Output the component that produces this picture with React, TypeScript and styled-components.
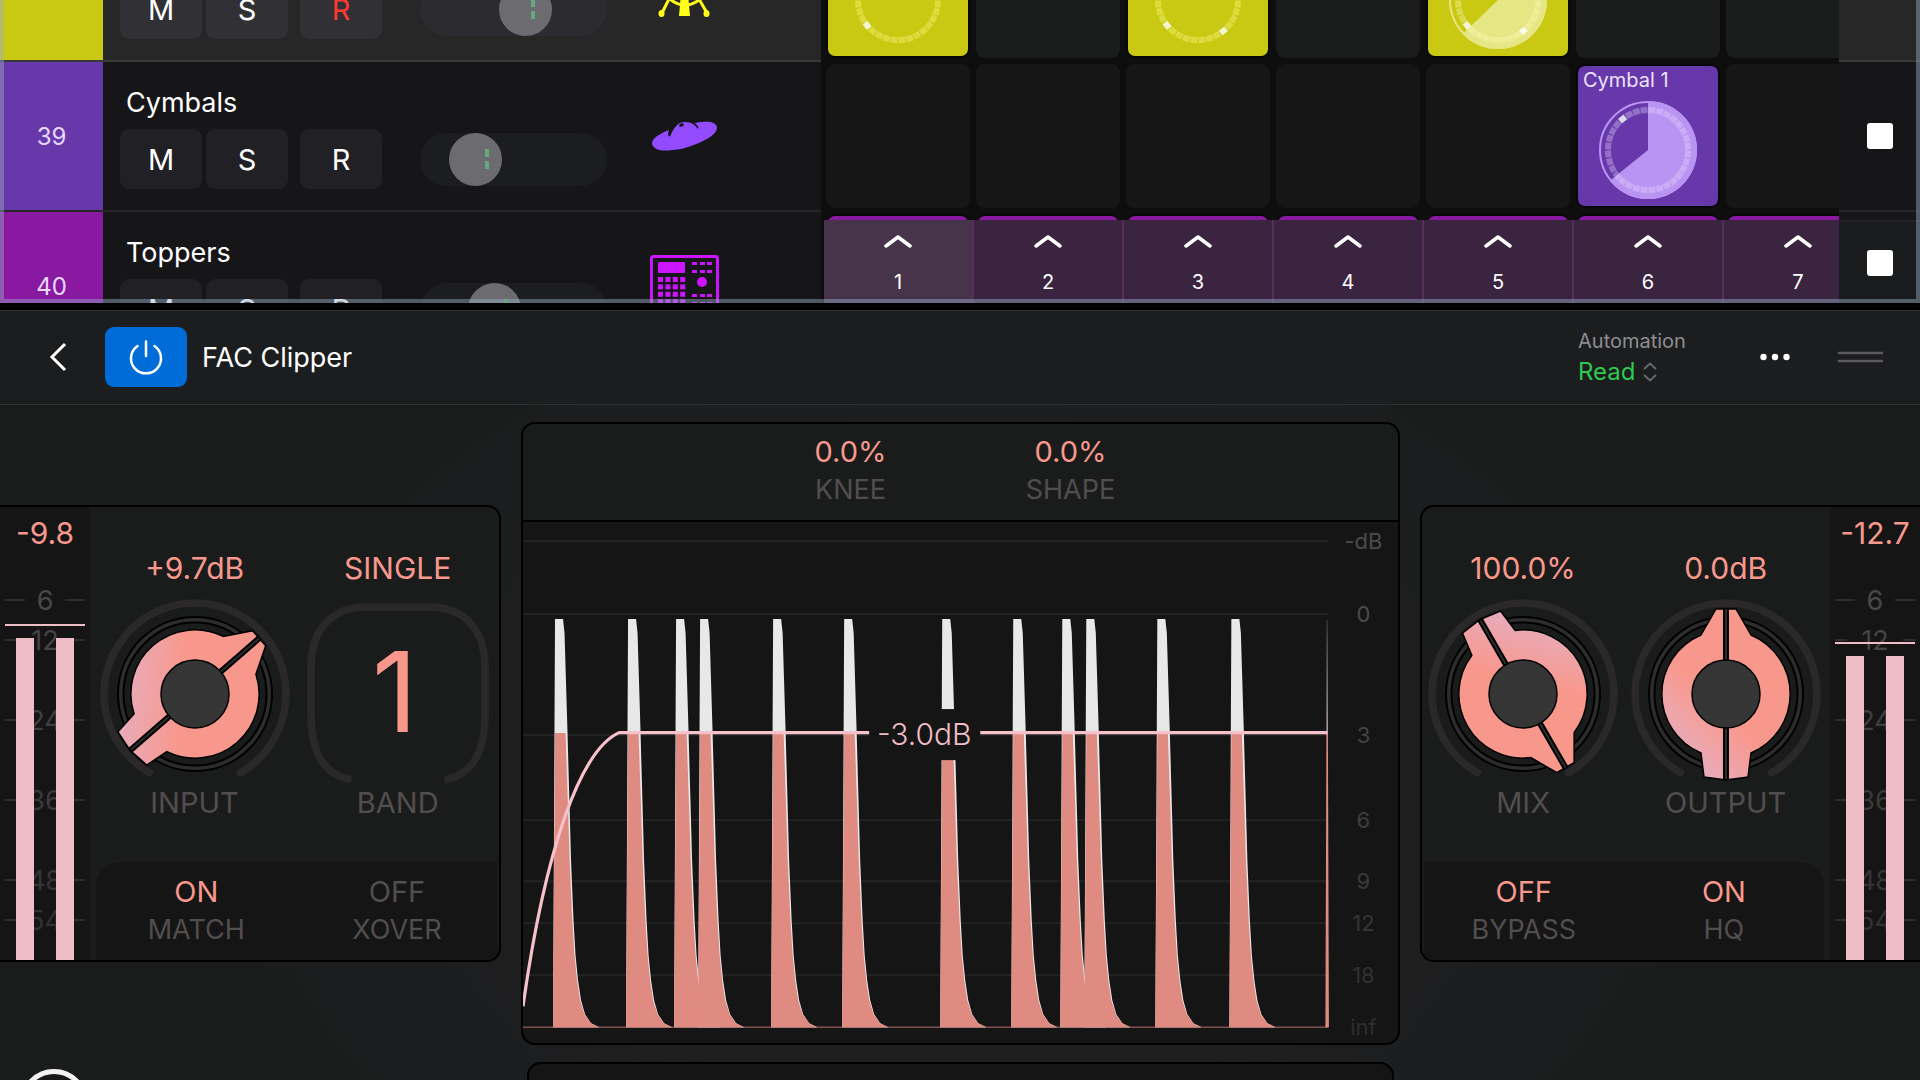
import React from 'react';
import styled, { createGlobalStyle } from 'styled-components';

const color = {
  salmon: '#f8988d',
  pink: '#efbdc6',
  muted: '#524d4e',
  well: '#151515',
  panel: '#1a1c1b',
};

const GlobalStyle = createGlobalStyle`
  *, *::before, *::after { box-sizing: border-box; }
  body {
    margin: 0;
    background: #000;
    color: #fff;
    font-family: Inter, "Liberation Sans", sans-serif;
  }
  button, select, input { font: inherit; color: inherit; margin: 0; }
  button { border: 0; padding: 0; background: none; cursor: pointer; }
`;

const Screen = styled.main`
  display: flex;
  flex-direction: column;
  height: 100vh;
  overflow: hidden;
`;

/* ---------- Track list and live loops grid ---------- */

const Tracks = styled.section`
  position: relative;
  display: flex;
  flex: none;
  height: 303px;
  overflow: hidden;
  background: #0e0e0e;
`;

const FocusFrame = styled.div`
  position: absolute;
  inset: 0;
  border: 4px solid rgba(150, 175, 200, 0.45);
  border-top: 0;
  pointer-events: none;
`;

const TrackList = styled.div`
  flex: 0 0 821px;
  margin-top: -88px;
`;

const TrackRow = styled.div<{ $active?: boolean }>`
  display: flex;
  height: 150px;
  background: ${(p) => (p.$active ? '#272728' : '#161618')};
  border-bottom: 2px solid ${(p) => (p.$active ? '#38383a' : '#262628')};
`;

const TrackNumber = styled.div<{ $fill: string }>`
  display: flex;
  align-items: center;
  justify-content: center;
  width: 103px;
  background: ${(p) => p.$fill};
  color: #e6d8fb;
  font-size: 24px;
`;

const TrackBody = styled.div`
  display: flex;
  flex-direction: column;
  gap: 10px;
  width: 504px;
  padding: 25px 0 0 17px;
`;

const TrackName = styled.div`
  height: 32px;
  padding-left: 6px;
  font-size: 27px;
  line-height: 32px;
`;

const TrackControls = styled.div`
  display: flex;
  align-items: center;
`;

const TrackButton = styled.button<{ $active?: boolean; $armed?: boolean }>`
  width: 82px;
  height: 60px;
  border-radius: 9px;
  background: ${(p) => (p.$active ? '#313035' : '#212024')};
  color: ${(p) => (p.$armed ? '#ff3b30' : '#fff')};
  font-size: 29px;
  & + & { margin-left: 4px; }
  & + & + & { margin-left: 12px; }
`;

const Fader = styled.label`
  display: grid;
  align-items: center;
  width: 187px;
  margin-left: auto;
  > * { grid-area: 1 / 1; }
`;

const FaderInput = styled.input<{ $active?: boolean }>`
  appearance: none;
  width: 100%;
  height: 53px;
  border-radius: 27px;
  background: ${(p) => (p.$active ? '#2c2b2f' : '#1c1d1e')};
  &::-webkit-slider-thumb {
    appearance: none;
    width: 53px;
    height: 53px;
    border-radius: 50%;
    background: #6c6b6f;
  }
`;

const LevelTicks = styled.span`
  display: grid;
  gap: 4px;
  width: 4px;
  z-index: 1;
  pointer-events: none;
  i { height: 8px; background: #6aa781; }
`;

const TrackIcon = styled.div`
  display: flex;
  align-items: center;
  padding-left: 43px;
`;

const LoopGrid = styled.div`
  display: flex;
  flex-direction: column;
  flex: 1;
  min-width: 0;
  overflow: hidden;
`;

const CellViewport = styled.div`
  flex: 1;
  min-height: 0;
  overflow: hidden;
`;

const CellRows = styled.div`
  display: grid;
  grid-template-columns: repeat(7, 150px);
  grid-auto-rows: 150px;
  margin: -89px 0 0 2px;
`;

const Cell = styled.div<{ $active?: boolean }>`
  margin: 3px;
  padding: 2px;
  border-radius: 9px;
  background: ${(p) => (p.$active ? '#1b1c1c' : '#161617')};
`;

const Clip = styled.button<{ $fill: string }>`
  display: grid;
  grid-template-rows: 24px 1fr;
  width: 100%;
  height: 100%;
  border-radius: 7px;
  background: ${(p) => p.$fill};
  box-shadow: 0 0 0 2px #080808;
  color: #ece2fb;
  text-align: left;
`;

const ClipName = styled.span`
  padding: 2px 0 0 5px;
  font-size: 20px;
  line-height: 24px;
`;

const ClipDial = styled.svg`
  display: block;
  margin: 11px auto 0;
`;

const SceneStrip = styled.div`
  display: grid;
  grid-template-columns: repeat(7, 150px);
  height: 83px;
  padding-left: 3px;
`;

const Scene = styled.button<{ $current?: boolean }>`
  display: flex;
  flex-direction: column;
  align-items: center;
  gap: 20px;
  padding-top: 15px;
  border-right: 2px solid #54305a;
  background: ${(p) => (p.$current ? '#47344b' : '#3a2440')};
  font-size: 20px;
  line-height: 28px;
`;

const StopColumn = styled.div`
  display: flex;
  flex-direction: column;
  flex: 0 0 81px;
`;

const StopRows = styled.div`
  flex: 1;
  min-height: 0;
  overflow: hidden;
  > :first-child { margin-top: -88px; }
`;

const StopRow = styled(TrackRow)`
  align-items: center;
  justify-content: center;
`;

const StopAll = styled.div`
  display: flex;
  align-items: center;
  justify-content: center;
  height: 83px;
  border-top: 2px solid #232325;
  background: #1b1c1d;
`;

const StopButton = styled.button`
  width: 26px;
  height: 26px;
  border-radius: 3px;
  background: #fff;
`;

/* ---------- Plugin header ---------- */

const PluginHeader = styled.header`
  display: flex;
  align-items: center;
  flex: none;
  height: 95px;
  margin-top: 7px;
  padding: 0 36px 2px 48px;
  border-top: 1px solid #333436;
  border-bottom: 1px solid #303133;
  background: #1c1d1f;
`;

const PowerButton = styled.button`
  display: flex;
  align-items: center;
  justify-content: center;
  width: 82px;
  height: 60px;
  margin-left: 37px;
  border-radius: 9px;
  background: #006cd8;
`;

const PluginTitle = styled.h1`
  margin: 2px auto 0 15px;
  font-size: 27px;
  font-weight: 400;
  line-height: 36px;
`;

const Automation = styled.label`
  display: flex;
  flex-direction: column;
  width: 175px;
  padding-top: 2px;
  color: #8d8d90;
  font-size: 20px;
  line-height: 28px;
`;

const AutomationValue = styled.span`
  display: flex;
  align-items: center;
  gap: 7px;
  height: 34px;
`;

const AutomationSelect = styled.select`
  appearance: none;
  padding: 0;
  border: 0;
  background: none;
  color: #30c850;
  font-size: 24px;
  line-height: 32px;
`;

const IconButton = styled.button`
  display: flex;
  align-items: center;
`;

const GripButton = styled(IconButton)`
  margin-left: 46px;
`;

/* ---------- Plugin body ---------- */

const PluginBody = styled.section`
  display: grid;
  grid-template-columns: 501fr 878fr 500fr;
  grid-template-rows: max-content max-content;
  gap: 17px 20px;
  align-items: start;
  flex: 1;
  min-height: 0;
  padding-top: 17px;
  overflow: hidden;
  background: radial-gradient(ellipse 42% 86% at 50% 60%, #201f1f 50%, #1b1d1f 76%, #1a1c1b 100%);
`;

const SidePanel = styled.section<{ $side: 'left' | 'right' }>`
  display: flex;
  flex-direction: ${(p) => (p.$side === 'left' ? 'row' : 'row-reverse')};
  margin-top: 83px;
  border: 2px solid #000;
  border-${(p) => p.$side}: 0;
  border-radius: ${(p) => (p.$side === 'left' ? '0 14px 14px 0' : '14px 0 0 14px')};
  background: ${color.panel};
  overflow: hidden;
`;

const MeterColumn = styled.div`
  display: flex;
  flex-direction: column;
  flex: 0 0 90px;
  padding-top: 10px;
  background: ${color.well};
`;

const MeterPeak = styled.output`
  color: ${color.salmon};
  font-size: 30px;
  line-height: 32px;
  text-align: center;
  white-space: nowrap;
`;

const MeterStack = styled.div`
  display: grid;
  flex: 1;
  > * { grid-area: 1 / 1; }
`;

const MeterScale = styled.div`
  display: flex;
  flex-direction: column;
  padding: 31px 5px 0;
`;

const MeterMark = styled.div<{ $gap?: boolean; $wide?: boolean; $tone: string }>`
  display: grid;
  grid-template-columns: ${(p) => (p.$wide ? '12px 1fr 12px' : '20px 1fr 20px')};
  align-items: center;
  height: 40px;
  margin-top: ${(p) => (p.$gap ? '40px' : '0')};
  color: ${(p) => p.$tone};
  font-size: 27px;
  text-align: center;
  &::before, &::after { content: ''; height: 2px; background: #2d2d2d; }
`;

const MeterBars = styled.div`
  display: flex;
  flex-direction: column;
  justify-content: flex-end;
  gap: 12px;
`;

const PeakLine = styled.div`
  height: 2px;
  margin: 0 5px;
  background: ${color.pink};
`;

const BarPair = styled.div<{ $level: number }>`
  display: flex;
  justify-content: center;
  gap: 22px;
  height: ${(p) => p.$level}px;
  i { width: 18px; background: ${color.pink}; }
`;

const Controls = styled.div`
  display: flex;
  flex-direction: column;
  flex: 1;
  min-width: 0;
  padding-top: 45px;
`;

const ControlRow = styled.div<{ $side: 'left' | 'right' }>`
  display: grid;
  grid-template-columns: 1fr 1fr;
  margin-${(p) => p.$side}: 3px;
`;

const Control = styled.label`
  position: relative;
  display: flex;
  flex-direction: column;
  align-items: center;
`;

const HiddenInput = styled.input`
  position: absolute;
  inset: 0;
  opacity: 0;
`;

const Value = styled.span`
  color: ${color.salmon};
  font-size: 30px;
  line-height: 32px;
`;

const Caption = styled.span`
  color: ${color.muted};
  font-size: 29px;
  line-height: 32px;
`;

const Drawing = styled.svg`
  display: block;
  margin-top: 16px;
  overflow: visible;
`;

const BandDial = styled.span`
  display: grid;
  place-items: center;
  > * { grid-area: 1 / 1; }
`;

const BandCount = styled.span`
  padding: 10px 6px 0 0;
  color: ${color.salmon};
  font-size: 112px;
  font-weight: 400;
  line-height: 112px;
`;

const ToggleBar = styled.div<{ $side: 'left' | 'right' }>`
  display: grid;
  grid-template-columns: 1fr 1fr;
  margin-top: 43px;
  margin-${(p) => p.$side}: 6px;
  margin-${(p) => (p.$side === 'left' ? 'right' : 'left')}: 2px;
  padding: 11px 0;
  border-radius: ${(p) => (p.$side === 'left' ? '24px 0 0 0' : '0 24px 0 0')};
  background: ${color.well};
`;

const Toggle = styled.button<{ $off?: boolean }>`
  display: flex;
  flex-direction: column;
  align-items: center;
  color: ${(p) => (p.$off ? color.muted : color.salmon)};
  font-size: 29px;
  line-height: 38px;
  small { color: ${color.muted}; font-size: 27px; }
`;

const CurvePanel = styled.section`
  border: 2px solid #000;
  border-radius: 14px;
  background: ${color.well};
  overflow: hidden;
`;

const CurveHeader = styled.div`
  display: grid;
  grid-template-columns: 220px 220px;
  justify-content: center;
  padding: 9px 0 11px;
  border-bottom: 2px solid #000;
  background: ${color.panel};
`;

const Chart = styled.svg`
  display: block;
  width: 100%;
  height: auto;
`;

const RoundButton = styled.button`
  width: 68px;
  height: 68px;
  margin: 7px 0 0 20px;
  border: 5px solid #f2f2f2;
  border-radius: 50%;
  background: #181818;
`;

const LowerPanel = styled.section`
  align-self: stretch;
  min-height: 60px;
  margin: 0 6px;
  border: 2px solid #000;
  border-radius: 14px 14px 0 0;
  background: ${color.well};
`;

/* ---------- Drawings ---------- */

const polar = (r: number, deg: number): [number, number] => {
  const a = (deg * Math.PI) / 180;
  return [r * Math.sin(a), -r * Math.cos(a)];
};

const DrumIcon = () => (
  <svg width="70" height="62" viewBox="0 0 70 62" fill="none" stroke="#ffff18" strokeWidth="3">
    <path d="M10 10h50v18c-4 14-15 22-25 22S14 42 10 28z" />
    <path d="M19 44l-7 14M49 44l8 14" />
    <path d="M31 38h7l2 23H29z" fill="#ffff18" stroke="none" />
    <ellipse cx="11.500" cy="58.500" rx="3" ry="3.500" fill="#ffff18" stroke="none" />
    <ellipse cx="56.500" cy="58.500" rx="3" ry="3.500" fill="#ffff18" stroke="none" />
  </svg>
);

const CymbalIcon = () => (
  <svg width="70" height="62" viewBox="0 0 70 62">
    <path
      fill="#944aff"
      d="M19 25C11 28 2 33 2 38.500C3 44 10 46 18 45.500C28 45 37 43 45 39.500C57 35 67 29 67 22.500C66 17 59 16.500 53 17C50 17 47 17.500 44.500 18.200C47 19.500 49 21.500 48 24C45 20 42 17 35 17C28 17 25 22 22 27C20.500 30 20.500 32.500 18.500 31C17.500 29 18.500 27 19 25Z"
    />
    <ellipse cx="31.500" cy="20" rx="2.500" ry="1.500" fill="#161618" transform="rotate(-20 31.500 20)" />
  </svg>
);

const DrumMachineIcon = () => (
  <svg width="70" height="62" viewBox="0 0 70 62" fill="#cc14ff">
    <rect x="1.500" y="1.500" width="66" height="60" rx="2" fill="none" stroke="#cc14ff" strokeWidth="3" />
    <rect x="8" y="7" width="27" height="11" rx="1" />
    {[0, 1, 2, 3].map((r) =>
      [0, 1, 2, 3].map((c) => <rect key={`${r}${c}`} x={8 + c * 7.400} y={22 + r * 7.400} width="5" height="5" />),
    )}
    {[7, 15, 39, 47].map((y) => [42, 50, 57].map((x) => <rect key={`${x}-${y}`} x={x} y={y} width="5" height="3" />))}
    <circle cx="52" cy="27" r="5" />
  </svg>
);

type DialProps = { line: string; pie?: [number, number]; fill?: string; hits: number[] };

const LoopDial = ({ line, pie, fill, hits }: DialProps) => {
  const wedge = (from: number, to: number) => {
    const [x1, y1] = polar(49, from);
    const [x2, y2] = polar(49, to);
    return `M0 0L${x1} ${y1}A49 49 0 ${to - from > 180 ? 1 : 0} 1 ${x2} ${y2}Z`;
  };
  return (
    <ClipDial width="98" height="98" viewBox="-49 -49 98 98">
      {pie && <path d={wedge(pie[0], pie[1])} fill={fill} />}
      {pie && <circle r="48" fill="none" stroke={fill} strokeWidth="2" />}
      {Array.from({ length: 32 }, (_, i) => (
        <rect
          key={i}
          x="-3.500"
          y="-43"
          width="7"
          height="6"
          fill={hits.includes(i) ? '#fff' : line}
          opacity={hits.includes(i) ? 0.8 : 0.35}
          transform={`rotate(${(i + 0.5) * 11.25})`}
        />
      ))}
    </ClipDial>
  );
};

const Knob = ({ id, angle }: { id: string; angle: number }) => (
  <Drawing width="192" height="187" viewBox="-96 -94 192 187">
    <defs>
      <linearGradient id={id} gradientUnits="userSpaceOnUse" x1="-50" y1="50" x2="-10" y2="10">
        <stop offset="0" stopColor="#e8abb9" />
        <stop offset="1" stopColor={color.salmon} />
      </linearGradient>
    </defs>
    <path d="M-45.500 78.800A91 91 0 1 1 45.500 78.800" fill="none" stroke="#2b2829" strokeWidth="7.500" strokeLinecap="round" />
    <circle r="77" fill="#2d2c2d" stroke="#000" strokeWidth="2" />
    <circle r="71.500" fill={color.panel} stroke="#000" strokeWidth="2" />
    <g transform={`rotate(${angle})`}>
      <path
        d="M-25 -59L-10 -85H10L25 -59A64 64 0 0 1 25 59L22 83L0 86L-22 83L-25 59A64 64 0 0 1 -25 -59Z"
        fill={`url(#${id})`}
        stroke="#000"
        strokeWidth="1.500"
      />
      <path d="M0 -86V86" stroke="#000" strokeWidth="6" />
      <path d="M0 -85V85" stroke="#2d2d2d" strokeWidth="2" />
    </g>
    <circle r="34" fill="#353535" stroke="#000" strokeWidth="1.500" />
  </Drawing>
);

const spikeStarts = [555, 628, 676, 700, 773, 844, 942, 1013, 1062, 1086, 1157, 1231];
const decay: [number, number, number][] = [
  [8, 619, 0],
  [9.5, 633, 0],
  [12.5, 733, 2],
  [14.5, 805, 1.6],
  [16, 860, 1.4],
  [18.5, 920, 1.2],
  [20.5, 955, 1],
  [23, 980, 1],
  [26, 1000, 1],
  [30, 1014, 0.5],
  [36, 1023, 0],
  [44, 1027, 0],
];

const spikePath = (x: number, clipped: boolean) => {
  const points = decay
    .filter((d) => !clipped || d[1] >= 733)
    .map(([dx, y, inset]) => `L${x + dx - (clipped ? inset : 0)} ${y}`)
    .join('');
  return `M${x - 2} 1027L${x} ${clipped ? 733 : 619}${points}Z`;
};

const gridLines: [string, number, string][] = [
  ['-dB', 541, '#4d4a4b'],
  ['0', 614, '#4d4a4b'],
  ['3', 735, '#454344'],
  ['6', 820, '#403e3f'],
  ['9', 881, '#3c3a3b'],
  ['12', 923, '#373636'],
  ['18', 975, '#323131'],
  ['inf', 1027, '#2e2d2d'],
];

const ClipChart = () => (
  <Chart viewBox="523 522 874 521" role="img" aria-label="Clipping curve">
    <defs>
      <linearGradient id="edge" gradientUnits="userSpaceOnUse" x1="0" y1="620" x2="0" y2="735">
        <stop offset="0" stopColor="#333" />
        <stop offset="1" stopColor="#b9a9aa" />
      </linearGradient>
    </defs>
    {gridLines.map(([label, y]) => (
      <path key={label} d={`M523 ${y}H1328`} stroke="#232323" strokeWidth="2" />
    ))}
    <path d="M523 1027H1328" stroke="#7a4f4b" strokeWidth="1.500" />
    {spikeStarts.map((x) => (
      <path key={x} d={spikePath(x, false)} fill="#e8e8e8" />
    ))}
    {spikeStarts.map((x) => (
      <path key={x} d={spikePath(x, true)} fill="#e08b81" />
    ))}
    <rect x="1326" y="620" width="1.500" height="115" fill="url(#edge)" />
    <path d="M1326 733h1.500L1328.500 1027H1325z" fill="#e08b81" />
    <path d="M523 1006C545 850 580 750 619 732.500H1327" fill="none" stroke="#f6c1ca" strokeWidth="3.200" />
    <rect x="869" y="709" width="111" height="51" fill={color.well} />
    <text x="924" y="745" fill={color.pink} fontSize="30" fontWeight="300" textAnchor="middle">
      -3.0dB
    </text>
    {gridLines.map(([label, y, tone]) => (
      <text key={label} x="1363" y={y + 8} fill={tone} fontSize="22" textAnchor="middle">
        {label}
      </text>
    ))}
  </Chart>
);

/* ---------- Composed parts ---------- */

type TrackProps = {
  number?: string;
  name?: string;
  fill: string;
  level: number;
  meter: number;
  active?: boolean;
  icon: React.ReactNode;
};

const Track = ({ number, name, fill, level, meter, active, icon }: TrackProps) => (
  <TrackRow $active={active}>
    <TrackNumber $fill={fill}>{number}</TrackNumber>
    <TrackBody>
      <TrackName>{name}</TrackName>
      <TrackControls>
        <TrackButton $active={active}>M</TrackButton>
        <TrackButton $active={active}>S</TrackButton>
        <TrackButton $active={active} $armed={active}>R</TrackButton>
        <Fader>
          <FaderInput type="range" aria-label="Volume" $active={active} defaultValue={level} />
          <LevelTicks style={{ marginLeft: meter }}>
            <i />
            <i />
          </LevelTicks>
        </Fader>
      </TrackControls>
    </TrackBody>
    <TrackIcon>{icon}</TrackIcon>
  </TrackRow>
);

const marks: { label: string; tone: string; gap?: boolean }[] = [
  { label: '6', tone: '#4b4849' },
  { label: '12', tone: '#454344' },
  { label: '24', tone: '#403e3f', gap: true },
  { label: '36', tone: '#3b393a', gap: true },
  { label: '48', tone: '#363435', gap: true },
  { label: '54', tone: '#333132' },
];

const Meter = ({ peak, level }: { peak: string; level: number }) => (
  <MeterColumn>
    <MeterPeak>{peak}</MeterPeak>
    <MeterStack>
      <MeterScale>
        {marks.map((m) => (
          <MeterMark key={m.label} $gap={m.gap} $tone={m.tone} $wide={m.label.length > 1}>
            {m.label}
          </MeterMark>
        ))}
      </MeterScale>
      <MeterBars>
        <PeakLine />
        <BarPair $level={level}>
          <i />
          <i />
        </BarPair>
      </MeterBars>
    </MeterStack>
  </MeterColumn>
);

const KnobControl = ({ name, value, angle }: { name: string; value: string; angle: number }) => (
  <Control>
    <Value>{value}</Value>
    <Knob id={`knob-${name}`} angle={angle} />
    <Caption>{name}</Caption>
    <HiddenInput type="range" aria-label={name} />
  </Control>
);

const yellow = '#c9c913';
const clipsByCell: Record<string, React.ReactNode> = {
  '0-0': (
    <Clip $fill={yellow}>
      <span />
      <LoopDial line="#ffff90" hits={[20]} />
    </Clip>
  ),
  '0-2': (
    <Clip $fill={yellow}>
      <span />
      <LoopDial line="#ffff90" hits={[20, 12]} />
    </Clip>
  ),
  '0-4': (
    <Clip $fill={yellow}>
      <span />
      <LoopDial line="#ffffc0" fill="#e6e685" pie={[0, 226]} hits={[20, 12]} />
    </Clip>
  ),
  '1-5': (
    <Clip $fill="#6638aa">
      <ClipName>Cymbal 1</ClipName>
      <LoopDial line="#e8dcff" fill="#ba94f2" pie={[0, 231]} hits={[28]} />
    </Clip>
  ),
};

const App = () => (
  <Screen>
    <GlobalStyle />
    <Tracks>
      <TrackList>
        <Track fill={yellow} level={59} meter={111} active icon={<DrumIcon />} />
        <Track number="39" name="Cymbals" fill="#6638aa" level={22} meter={65} icon={<CymbalIcon />} />
        <Track number="40" name="Toppers" fill="#8a19a2" level={36} meter={84} icon={<DrumMachineIcon />} />
      </TrackList>
      <LoopGrid>
        <CellViewport>
          <CellRows>
            {[0, 1, 2].map((r) =>
              [0, 1, 2, 3, 4, 5, 6].map((c) => (
                <Cell key={`${r}-${c}`} $active={r === 0}>
                  {r === 2 ? <Clip $fill="#8a19a2" /> : clipsByCell[`${r}-${c}`]}
                </Cell>
              )),
            )}
          </CellRows>
        </CellViewport>
        <SceneStrip>
          {[1, 2, 3, 4, 5, 6, 7].map((n) => (
            <Scene key={n} $current={n === 1}>
              <svg width="28" height="13" viewBox="0 0 28 13" fill="none" stroke="#fff" strokeWidth="3.500" strokeLinecap="round" strokeLinejoin="round">
                <path d="M2 11L14 2L26 11" />
              </svg>
              {n}
            </Scene>
          ))}
        </SceneStrip>
      </LoopGrid>
      <StopColumn>
        <StopRows>
          <StopRow $active />
          <StopRow>
            <StopButton aria-label="Stop row" />
          </StopRow>
          <StopRow />
        </StopRows>
        <StopAll>
          <StopButton aria-label="Stop all" />
        </StopAll>
      </StopColumn>
      <FocusFrame />
    </Tracks>

    <PluginHeader>
      <IconButton aria-label="Back">
        <svg width="20" height="30" viewBox="0 0 20 30" fill="none" stroke="#fff" strokeWidth="3">
          <path d="M17 2L4 15L17 28" />
        </svg>
      </IconButton>
      <PowerButton aria-label="Power">
        <svg width="36" height="36" viewBox="0 0 36 36" fill="none" stroke="#fff" strokeWidth="2.500" strokeLinecap="round">
          <path d="M9.500 7A15 15 0 1 0 26.500 7M18 2.500V17" />
        </svg>
      </PowerButton>
      <PluginTitle>FAC Clipper</PluginTitle>
      <Automation>
        Automation
        <AutomationValue>
          <AutomationSelect defaultValue="Read">
            <option>Read</option>
          </AutomationSelect>
          <svg width="14" height="20" viewBox="0 0 14 20" fill="none" stroke="#6a6a6d" strokeWidth="1.800">
            <path d="M1 7L7 1.500L13 7M1 13L7 18.500L13 13" />
          </svg>
        </AutomationValue>
      </Automation>
      <IconButton aria-label="More">
        <svg width="38" height="10" viewBox="0 0 38 10" fill="#fff">
          <circle cx="10.500" cy="5" r="3.200" />
          <circle cx="22" cy="5" r="3.200" />
          <circle cx="33.500" cy="5" r="3.200" />
        </svg>
      </IconButton>
      <GripButton aria-label="Resize">
        <svg width="47" height="14" viewBox="0 0 47 14" stroke="#5b5b5e" strokeWidth="2.500" strokeLinecap="round">
          <path d="M2 3H45M2 11H45" />
        </svg>
      </GripButton>
    </PluginHeader>

    <PluginBody>
      <SidePanel $side="left">
        <Meter peak="-9.8" level={322} />
        <Controls>
          <ControlRow $side="left">
            <KnobControl name="INPUT" value="+9.7dB" angle={49} />
            <Control as="div">
              <Value>SINGLE</Value>
              <BandDial>
                <Drawing width="192" height="187" viewBox="-96 -94 192 187">
                  <path
                    d="M-50 85C-75 79 -87 58 -87 20V-26C-87 -64 -67 -87 -31 -87H31C67 -87 87 -64 87 -26V20C87 58 75 79 50 85"
                    fill="none"
                    stroke="#2b2829"
                    strokeWidth="7.500"
                    strokeLinecap="round"
                  />
                </Drawing>
                <BandCount>1</BandCount>
              </BandDial>
              <Caption>BAND</Caption>
            </Control>
          </ControlRow>
          <ToggleBar $side="left">
            <Toggle>
              ON<small>MATCH</small>
            </Toggle>
            <Toggle $off>
              OFF<small>XOVER</small>
            </Toggle>
          </ToggleBar>
        </Controls>
      </SidePanel>

      <CurvePanel>
        <CurveHeader>
          <Toggle>
            0.0%<small>KNEE</small>
          </Toggle>
          <Toggle>
            0.0%<small>SHAPE</small>
          </Toggle>
        </CurveHeader>
        <ClipChart />
      </CurvePanel>

      <SidePanel $side="right">
        <Meter peak="-12.7" level={304} />
        <Controls>
          <ControlRow $side="right">
            <KnobControl name="MIX" value="100.0%" angle={150} />
            <KnobControl name="OUTPUT" value="0.0dB" angle={0} />
          </ControlRow>
          <ToggleBar $side="right">
            <Toggle>
              OFF<small>BYPASS</small>
            </Toggle>
            <Toggle>
              ON<small>HQ</small>
            </Toggle>
          </ToggleBar>
        </Controls>
      </SidePanel>

      <RoundButton aria-label="Open menu" />
      <LowerPanel />
    </PluginBody>
  </Screen>
);

export default App;
